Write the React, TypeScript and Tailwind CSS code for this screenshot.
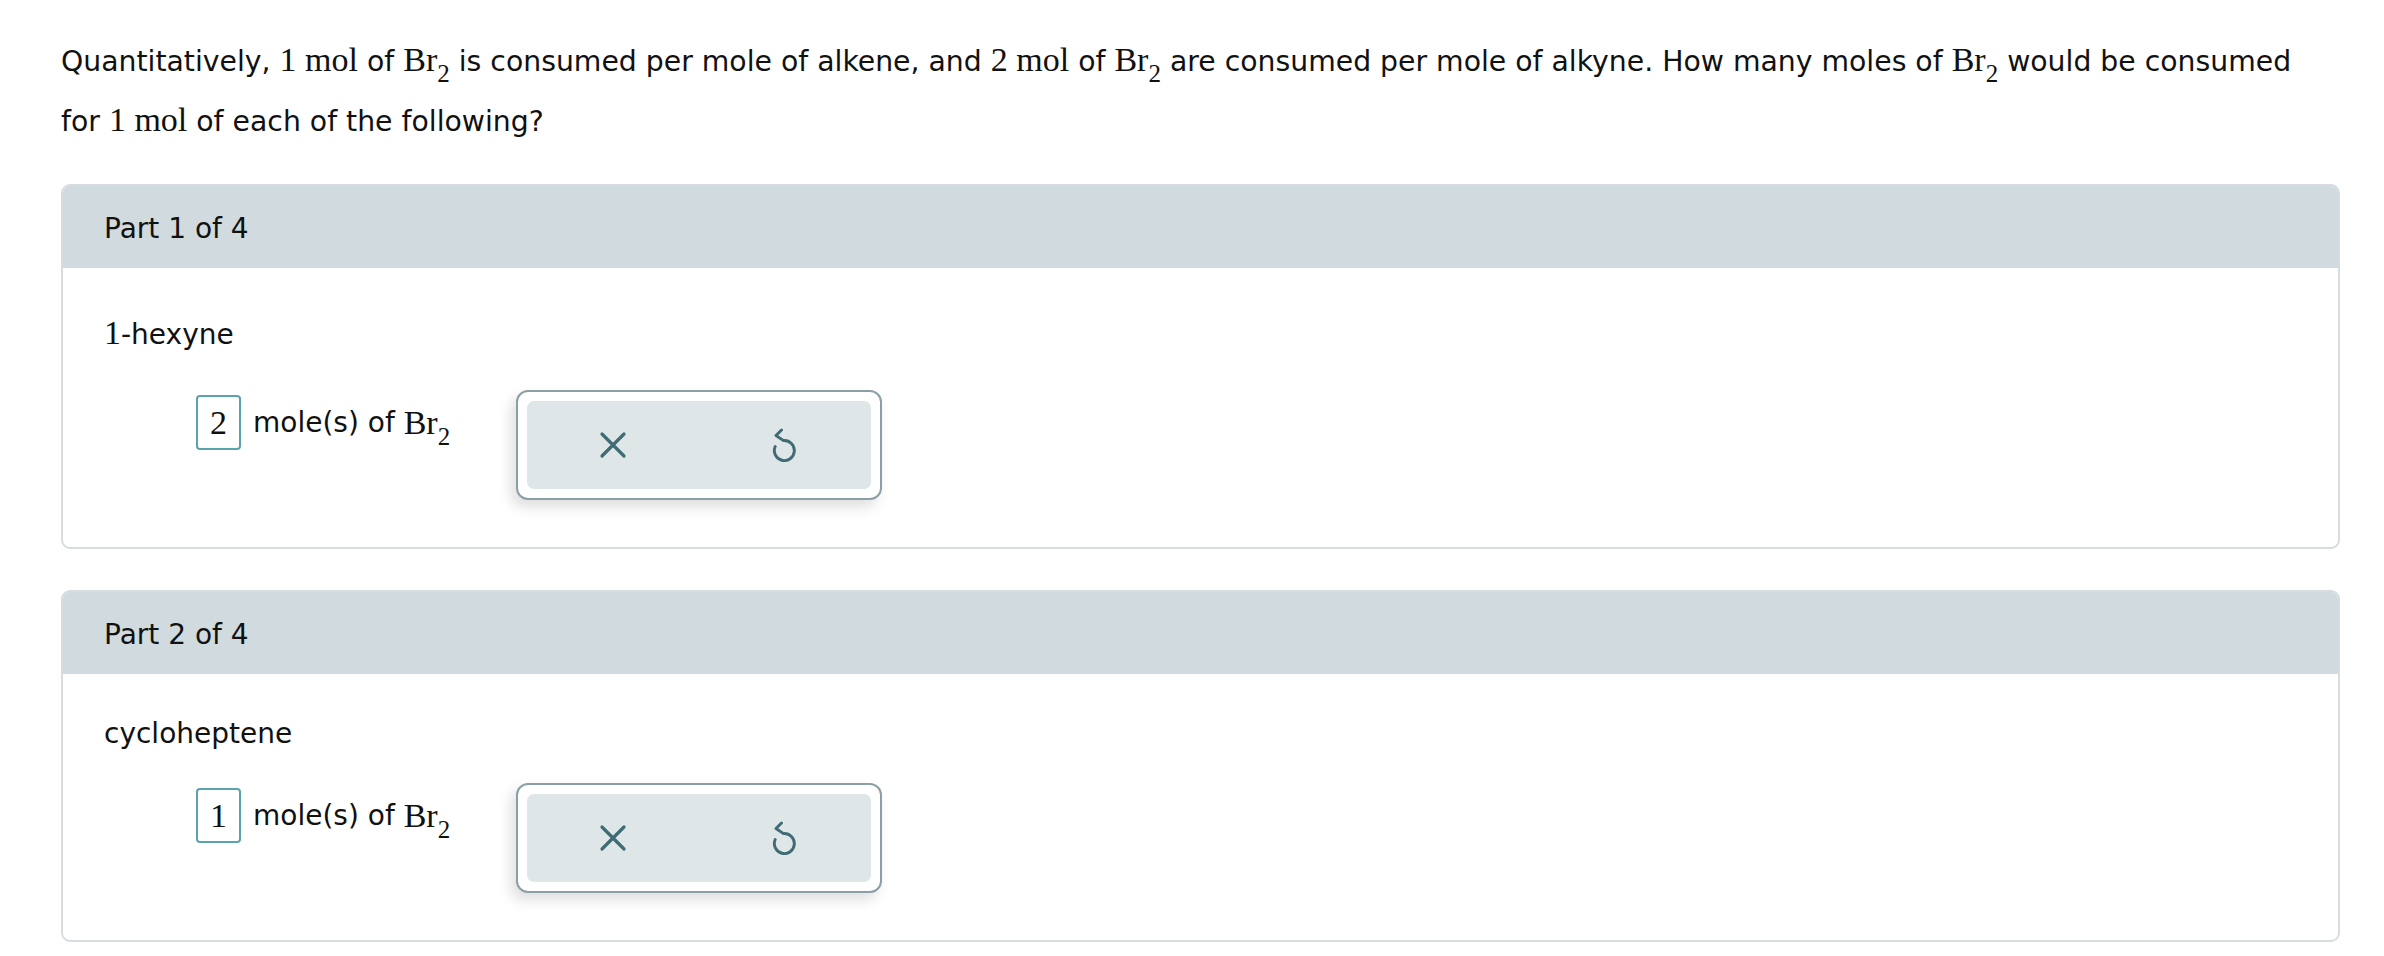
import React from "react";

const sans = { fontFamily: '"DejaVu Sans", Verdana, sans-serif' };

// TeX-like inline math in a serif face
const M: React.FC<{ children: React.ReactNode }> = ({ children }) => (
  <span className="font-['Liberation_Serif',serif] text-[34px] leading-none">{children}</span>
);

const Br2: React.FC = () => (
  <span className="font-['Liberation_Serif',serif] text-[34px] leading-none whitespace-nowrap">
    Br<sub className="text-[25px] leading-none bottom-[-0.45em]">2</sub>
  </span>
);

const ClearIcon = () => (
  <svg width="28" height="28" viewBox="0 0 28 28" fill="none">
    <path d="M3 3 L25 25 M25 3 L3 25" stroke="#3e6b74" strokeWidth="3.2" strokeLinecap="round" />
  </svg>
);

const ResetIcon = () => (
  <svg width="28" height="34" viewBox="0 0 28 34" fill="none">
    <path
      d="M10.5 2 L5 7.5 L12.5 12.6 A10 10 0 1 1 4.2 18.5"
      stroke="#3e6b74"
      strokeWidth="2.9"
      strokeLinecap="round"
      strokeLinejoin="round"
    />
  </svg>
);

type PartProps = {
  label: string;
  prompt: React.ReactNode;
  value: string;
  textTop: string;
  rowTop: string;
};

const Part: React.FC<PartProps> = ({ label, prompt, value, textTop, rowTop }) => (
  <div className="ml-[61px] w-[2279px] rounded-[9px] border-2 border-[#d6dcdf] bg-white overflow-hidden">
    <div className="h-[82px] bg-[#d1dbdf] flex items-center px-[41px] pt-[4px] text-[28px] text-[#111]">
      {label}
    </div>
    <div className={`px-[41px] pb-[47px] ${textTop}`}>
      <div className="text-[28px] leading-[42px] h-[42px] text-[#111] flex items-center">{prompt}</div>
      <div className={`flex items-start ml-[92px] ${rowTop}`}>
        <div className="w-[320px] h-[55px] mt-[5px] flex items-center text-[28px] text-[#111]">
          <div className="w-[45px] h-[55px] border-2 border-[#5aa2ac] rounded-[4px] flex items-center justify-center font-['Liberation_Serif',serif] text-[34px]">
            {value}
          </div>
          <span className="ml-[12px]">mole(s) of&nbsp;</span>
          <Br2 />
        </div>
        <div className="w-[366px] h-[110px] rounded-[12px] border-2 border-[#8b9fa6] bg-white p-[9px] shadow-[-5px_7px_14px_rgba(0,0,0,0.13)]">
          <div className="h-full rounded-[7px] bg-[#dfe6e8] flex">
            <button className="flex-1 flex items-center justify-center">
              <ClearIcon />
            </button>
            <button className="flex-1 flex items-center justify-center pb-[1px]">
              <ResetIcon />
            </button>
          </div>
        </div>
      </div>
    </div>
  </div>
);

const App: React.FC = () => {
  return (
    <div className="min-h-screen bg-white text-[#111]" style={sans}>
      <p className="ml-[61px] pt-[32px] text-[28.3px] leading-[60px] w-[2300px]">
        Quantitatively, <M>1 mol</M> of <Br2 /> is consumed per mole of alkene, and <M>2 mol</M> of{" "}
        <Br2 /> are consumed per mole of alkyne. How many moles of <Br2 /> would be consumed
        <br />
        for <M>1 mol</M> of each of the following?
      </p>

      <div className="mt-[32px] flex flex-col gap-[41px]">
        <Part
          label="Part 1 of 4"
          prompt={
            <span>
              <M>1</M>-hexyne
            </span>
          }
          value="2"
          textTop="pt-[46px]"
          rowTop="mt-[34px]"
        />
        <Part
          label="Part 2 of 4"
          prompt={<span>cycloheptene</span>}
          value="1"
          textTop="pt-[39px]"
          rowTop="mt-[28px]"
        />
      </div>
    </div>
  );
};

export default App;
